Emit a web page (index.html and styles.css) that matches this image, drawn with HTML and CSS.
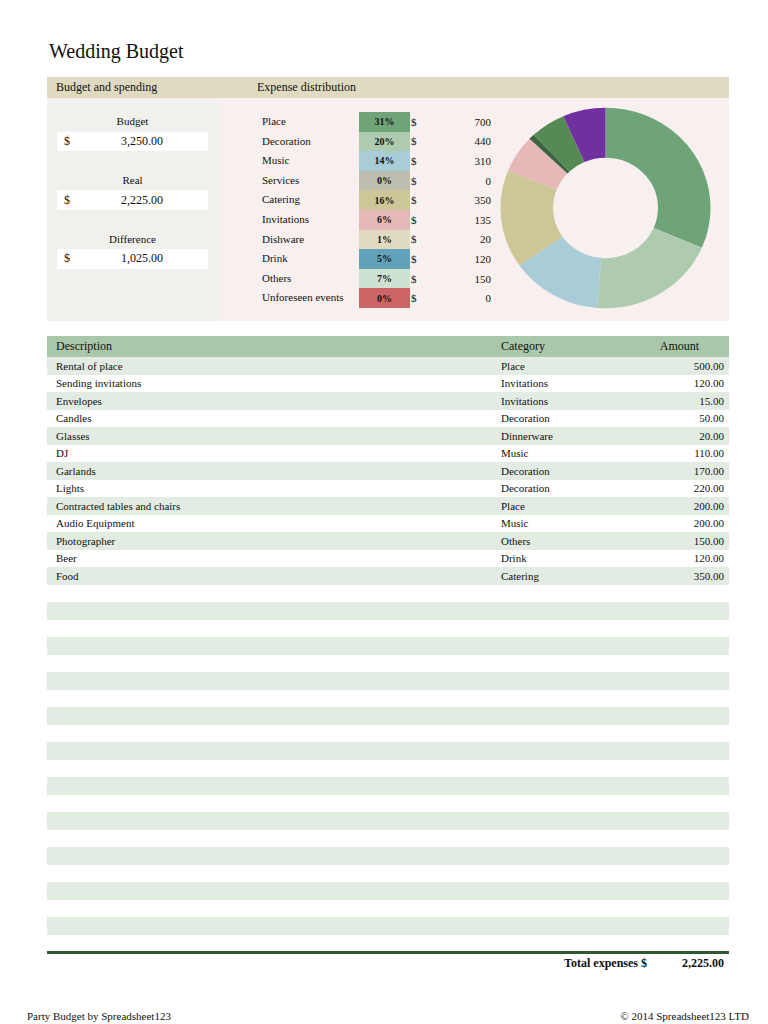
FILE: index.html
```html
<!DOCTYPE html>
<html lang="en">
<head>
<meta charset="utf-8">
<title>Wedding Budget</title>
<link rel="stylesheet" href="styles.css">
</head>
<body>
<div class="page">
  <h1 class="title">Wedding Budget</h1>

  <div class="band">
    <div class="band-left">Budget and spending</div>
    <div class="band-right">Expense distribution</div>
  </div>

  <div class="panels">
    <div class="summary">
      <div class="s-label">Budget</div>
      <div class="s-box"><span>$</span><span>3,250.00</span></div>
      <div class="s-gap"></div>
      <div class="s-label">Real</div>
      <div class="s-box"><span>$</span><span>2,225.00</span></div>
      <div class="s-gap"></div>
      <div class="s-label">Difference</div>
      <div class="s-box"><span>$</span><span>1,025.00</span></div>
    </div>

    <div class="dist">
      <div class="dist-list">
        <div class="d-name">Place</div><div class="d-pct c-place">31%</div><div class="d-cur">$</div><div class="d-val">700</div>
        <div class="d-name">Decoration</div><div class="d-pct c-deco">20%</div><div class="d-cur">$</div><div class="d-val">440</div>
        <div class="d-name">Music</div><div class="d-pct c-music">14%</div><div class="d-cur">$</div><div class="d-val">310</div>
        <div class="d-name">Services</div><div class="d-pct c-serv">0%</div><div class="d-cur">$</div><div class="d-val">0</div>
        <div class="d-name">Catering</div><div class="d-pct c-cater">16%</div><div class="d-cur">$</div><div class="d-val">350</div>
        <div class="d-name">Invitations</div><div class="d-pct c-invit">6%</div><div class="d-cur">$</div><div class="d-val">135</div>
        <div class="d-name">Dishware</div><div class="d-pct c-dish">1%</div><div class="d-cur">$</div><div class="d-val">20</div>
        <div class="d-name">Drink</div><div class="d-pct c-drink">5%</div><div class="d-cur">$</div><div class="d-val">120</div>
        <div class="d-name">Others</div><div class="d-pct c-others">7%</div><div class="d-cur">$</div><div class="d-val">150</div>
        <div class="d-name">Unforeseen events</div><div class="d-pct c-unf">0%</div><div class="d-cur">$</div><div class="d-val">0</div>
      </div>
      <svg class="donut" width="230" height="223" viewBox="0 0 230 223">
        <g transform="translate(114.5 110) scale(1 0.955) rotate(-90)" fill="none" stroke-width="52.5">
          <circle r="78.75" stroke="#6fa378" stroke-dasharray="155.67 494.80" stroke-dashoffset="0"/>
          <circle r="78.75" stroke="#aecbb0" stroke-dasharray="97.85 494.80" stroke-dashoffset="-155.67"/>
          <circle r="78.75" stroke="#a8cdd8" stroke-dasharray="68.94 494.80" stroke-dashoffset="-253.52"/>
          <circle r="78.75" stroke="#cdc697" stroke-dasharray="77.83 494.80" stroke-dashoffset="-322.46"/>
          <circle r="78.75" stroke="#e6b8b8" stroke-dasharray="30.02 494.80" stroke-dashoffset="-400.29"/>
          <circle r="78.75" stroke="#3d6640" stroke-dasharray="4.45 494.80" stroke-dashoffset="-430.31"/>
          <circle r="78.75" stroke="#558a55" stroke-dasharray="26.69 494.80" stroke-dashoffset="-434.76"/>
          <circle r="78.75" stroke="#7030a0" stroke-dasharray="33.36 494.80" stroke-dashoffset="-461.45"/>
        </g>
      </svg>
    </div>
  </div>

  <div class="table">
    <div class="t-head">
      <div class="c-desc">Description</div>
      <div class="c-cat">Category</div>
      <div class="c-amt-h">Amount</div>
    </div>
    <div class="t-body">
      <div class="t-row"><div class="c-desc">Rental of place</div><div class="c-cat">Place</div><div class="c-amt">500.00</div></div>
      <div class="t-row"><div class="c-desc">Sending invitations</div><div class="c-cat">Invitations</div><div class="c-amt">120.00</div></div>
      <div class="t-row"><div class="c-desc">Envelopes</div><div class="c-cat">Invitations</div><div class="c-amt">15.00</div></div>
      <div class="t-row"><div class="c-desc">Candles</div><div class="c-cat">Decoration</div><div class="c-amt">50.00</div></div>
      <div class="t-row"><div class="c-desc">Glasses</div><div class="c-cat">Dinnerware</div><div class="c-amt">20.00</div></div>
      <div class="t-row"><div class="c-desc">DJ</div><div class="c-cat">Music</div><div class="c-amt">110.00</div></div>
      <div class="t-row"><div class="c-desc">Garlands</div><div class="c-cat">Decoration</div><div class="c-amt">170.00</div></div>
      <div class="t-row"><div class="c-desc">Lights</div><div class="c-cat">Decoration</div><div class="c-amt">220.00</div></div>
      <div class="t-row"><div class="c-desc">Contracted tables and chairs</div><div class="c-cat">Place</div><div class="c-amt">200.00</div></div>
      <div class="t-row"><div class="c-desc">Audio Equipment</div><div class="c-cat">Music</div><div class="c-amt">200.00</div></div>
      <div class="t-row"><div class="c-desc">Photographer</div><div class="c-cat">Others</div><div class="c-amt">150.00</div></div>
      <div class="t-row"><div class="c-desc">Beer</div><div class="c-cat">Drink</div><div class="c-amt">120.00</div></div>
      <div class="t-row"><div class="c-desc">Food</div><div class="c-cat">Catering</div><div class="c-amt">350.00</div></div>
      <div class="t-row"></div><div class="t-row"></div><div class="t-row"></div><div class="t-row"></div>
      <div class="t-row"></div><div class="t-row"></div><div class="t-row"></div><div class="t-row"></div>
      <div class="t-row"></div><div class="t-row"></div><div class="t-row"></div><div class="t-row"></div>
      <div class="t-row"></div><div class="t-row"></div><div class="t-row"></div><div class="t-row"></div>
      <div class="t-row"></div><div class="t-row"></div><div class="t-row"></div><div class="t-row"></div>
    </div>
    <div class="t-total">
      <div class="total-label">Total expenses $</div>
      <div class="total-val">2,225.00</div>
    </div>
  </div>

  <div class="footer">
    <span>Party Budget by Spreadsheet123</span>
    <span>© 2014 Spreadsheet123 LTD</span>
  </div>
</div>
</body>
</html>
```

FILE: styles.css
```css
* { box-sizing: border-box; }

html, body {
  margin: 0;
  padding: 0;
  background: #ffffff;
}

body {
  font-family: "Liberation Serif", "Times New Roman", serif;
  color: #111;
}

.page {
  width: 768px;
  padding: 39px 39px 0 47px;
}

.title {
  margin: 0 0 14px 2px;
  font-size: 20px;
  line-height: 24px;
  font-weight: normal;
}

.band {
  display: flex;
  height: 21px;
  width: 682px;
  background: #e0dbc0;
  font-size: 12px;
  line-height: 21px;
}
.band-left { width: 210px; padding-left: 9px; }
.band-right { flex: 1; }

.panels {
  display: flex;
  width: 682px;
  height: 223px;
}

.summary {
  width: 171px;
  background: #f0f0ec;
  padding: 14px 10px 0 10px;
  font-size: 11px;
}
.s-label {
  height: 19.6px;
  line-height: 19.6px;
  text-align: center;
}
.s-box {
  height: 19.6px;
  background: #ffffff;
  display: flex;
  justify-content: space-between;
  align-items: center;
  padding: 0 45px 0 7px;
  font-size: 12px;
}
.s-gap { height: 19.6px; }

.dist {
  flex: 1;
  background: #f8f0ef;
  display: flex;
  align-items: flex-start;
  padding-left: 44px;
}

.dist-list {
  margin-top: 14px;
  display: grid;
  grid-template-columns: 97px 51px 14px 67px;
  grid-auto-rows: 19.6px;
  font-size: 11px;
  align-items: center;
}
.d-name { line-height: 19.6px; }
.d-pct {
  height: 100%;
  display: flex;
  align-items: center;
  justify-content: center;
  font-size: 10px;
  font-weight: bold;
}
.d-cur { padding-left: 1px; }
.d-val { text-align: right; }

.c-place { background: #6fa378; }
.c-deco { background: #aecbb0; }
.c-music { background: #a8cdd8; }
.c-serv { background: #bfbdb0; }
.c-cater { background: #cdc697; }
.c-invit { background: #e6b8b8; }
.c-dish { background: #e0dbc0; }
.c-drink { background: #63a2b8; }
.c-others { background: #cfe1d1; }
.c-unf { background: #cc6666; }

.donut { display: block; flex: none; }

.table {
  width: 682px;
  margin-top: 15px;
}

.t-head, .t-row {
  display: grid;
  grid-template-columns: 445px 138px 99px;
  align-items: center;
}
.t-head {
  height: 21px;
  background: #a9c8ab;
  font-size: 12px;
}
.t-row {
  height: 17.5px;
  font-size: 11px;
}
.t-body .t-row:nth-child(odd) { background: #e2ece3; }

.c-desc { padding-left: 9px; }
.c-cat { padding-left: 9px; }
.c-amt { text-align: right; padding-right: 5px; }
.c-amt-h { text-align: center; padding-right: 0; }

.t-total {
  margin-top: 16.5px;
  border-top: 3px solid #2e5a33;
  height: 21px;
  display: flex;
  justify-content: flex-end;
  align-items: center;
  font-size: 12px;
  font-weight: bold;
}
.total-val {
  width: 82px;
  text-align: right;
  padding-right: 5px;
}

.footer {
  margin: 37px 0 0 -20px;
  width: 722px;
  display: flex;
  justify-content: space-between;
  font-size: 11px;
  line-height: 14px;
}
```
